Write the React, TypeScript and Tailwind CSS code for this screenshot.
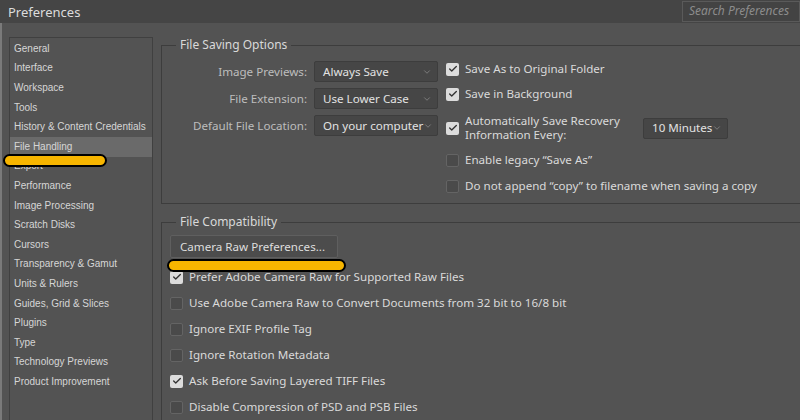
import React from 'react';
import { ChevronDown, Check } from 'lucide-react';

const sideItems = [
  'General',
  'Interface',
  'Workspace',
  'Tools',
  'History & Content Credentials',
  'File Handling',
  'Export',
  'Performance',
  'Image Processing',
  'Scratch Disks',
  'Cursors',
  'Transparency & Gamut',
  'Units & Rulers',
  'Guides, Grid & Slices',
  'Plugins',
  'Type',
  'Technology Previews',
  'Product Improvement',
];

const CheckBox = ({ checked }: { checked?: boolean }) =>
  checked ? (
    <span className="w-[13px] h-[13px] rounded-[2px] bg-[#dcdcdc] flex items-center justify-center shrink-0">
      <Check size={10} strokeWidth={3.2} className="text-[#333333]" />
    </span>
  ) : (
    <span className="w-[13px] h-[13px] rounded-[2px] bg-[#4a4a4a] border border-[#646464] shrink-0" />
  );

const Select = ({ value, width }: { value: string; width: string }) => (
  <div
    className={
      'h-[21px] flex items-center justify-between pl-[8px] pr-[5px] bg-[#464646] border border-[#3d3d3d] rounded-[2px] text-[#e2e2e2] ' +
      width
    }
  >
    <span className="whitespace-nowrap">{value}</span>
    <ChevronDown size={10} strokeWidth={1.5} className="text-[#9a9a9a] shrink-0" />
  </div>
);

const Row = ({ checked, children, className = '' }: { checked?: boolean; children: React.ReactNode; className?: string }) => (
  <div className={'flex items-center gap-[6px] h-[16px] ' + className}>
    <CheckBox checked={checked} />
    <span className="whitespace-nowrap text-[#dadada]">{children}</span>
  </div>
);

export default function App() {
  return (
    <div
      className="w-[800px] h-[420px] overflow-hidden bg-[#535353] relative flex flex-col text-[11.6px] leading-[16px]"
      style={{ fontFamily: '"Noto Sans", "Liberation Sans", sans-serif' }}
    >
      {/* Title bar */}
      <div className="h-[23px] shrink-0 bg-[#454545] flex items-center justify-between pl-[8px]">
        <span className="text-[13px] text-[#dcdcdc]">Preferences</span>
        <div className="w-[118px] h-[21px] mt-[-1px] border border-[#5a5a5a] bg-[#434343] flex items-center pl-[6px]">
          <span className="italic text-[12px] text-[#8c8c8c] whitespace-nowrap">Search Preferences</span>
        </div>
      </div>

      {/* Body */}
      <div className="flex-1 flex border-l-2 border-[#7a7a7a] pl-[7px] pt-[14px]">
        {/* Sidebar */}
        <div
          className="w-[144px] h-[420px] shrink-0 border border-[#404040] pt-px text-[10px] text-[#d6d6d6]"
          style={{ fontFamily: '"Liberation Sans", Arial, sans-serif' }}
        >
          {sideItems.map((item) => (
            <div
              key={item}
              className={
                item === 'File Handling'
                  ? 'h-[19.6px] flex items-center pl-[4px] bg-[#6a6a6a] whitespace-nowrap'
                  : 'h-[19.6px] flex items-center pl-[4px] whitespace-nowrap'
              }
            >
              {item}
            </div>
          ))}
        </div>

        {/* Main */}
        <div className="ml-[8px] flex flex-col">
          <fieldset className="w-[660px] border border-[#3d3d3d] pb-[9px]">
            <legend className="ml-[14px] px-[4px] text-[12px] text-[#d9d9d9]">File Saving Options</legend>
            <div className="flex items-start pt-[8px]">
              <div className="grid grid-cols-[145px_124px] gap-x-[7px] gap-y-[6px]">
                <div className="h-[21px] flex items-center justify-end text-[#bdbdbd] whitespace-nowrap">Image Previews:</div>
                <Select value="Always Save" width="w-[124px]" />
                <div className="h-[21px] flex items-center justify-end text-[#bdbdbd] whitespace-nowrap">File Extension:</div>
                <Select value="Use Lower Case" width="w-[124px]" />
                <div className="h-[21px] flex items-center justify-end text-[#bdbdbd] whitespace-nowrap">Default File Location:</div>
                <Select value="On your computer" width="w-[124px]" />
              </div>
              <div className="ml-[8px] flex flex-col">
                <Row checked>Save As to Original Folder</Row>
                <Row checked className="mt-[9px]">Save in Background</Row>
                <div className="flex items-center mt-[12px] h-[28px]">
                  <div className="flex items-center gap-[6px] w-[197px]">
                    <CheckBox checked />
                    <span className="text-[#dadada] leading-[14px]">
                      Automatically Save Recovery
                      <br />
                      Information Every:
                    </span>
                  </div>
                  <Select value="10 Minutes" width="w-[85px]" />
                </div>
                <Row className="mt-[10px]">Enable legacy “Save As”</Row>
                <Row className="mt-[10px]">Do not append “copy” to filename when saving a copy</Row>
              </div>
            </div>
          </fieldset>

          <fieldset className="w-[660px] mt-[10px] border border-[#3d3d3d] pl-[8px] pb-[40px]">
            <legend className="ml-[6px] px-[4px] text-[12px] text-[#d9d9d9]">File Compatibility</legend>
            <div className="pt-[5px] flex flex-col">
              <div className="w-[168px] h-[23px] flex items-center pl-[9px] bg-[#4c4c4c] border border-[#5f5f5f] rounded-[2px] text-[#dedede] whitespace-nowrap">
                Camera Raw Preferences...
              </div>
              <Row checked className="mt-[11px]">Prefer Adobe Camera Raw for Supported Raw Files</Row>
              <Row className="mt-[10px]">Use Adobe Camera Raw to Convert Documents from 32 bit to 16/8 bit</Row>
              <Row className="mt-[10px]">Ignore EXIF Profile Tag</Row>
              <Row className="mt-[10px]">Ignore Rotation Metadata</Row>
              <Row checked className="mt-[10px]">Ask Before Saving Layered TIFF Files</Row>
              <Row className="mt-[10px]">Disable Compression of PSD and PSB Files</Row>
            </div>
          </fieldset>
        </div>
      </div>

      {/* Annotation marks */}
      <div className="absolute left-[3px] top-[154px] w-[104px] h-[13px] rounded-full bg-[#f7b500] border-2 border-black" />
      <div className="absolute left-[167px] top-[259px] w-[179px] h-[13px] rounded-full bg-[#f7b500] border-2 border-black" />
    </div>
  );
}
